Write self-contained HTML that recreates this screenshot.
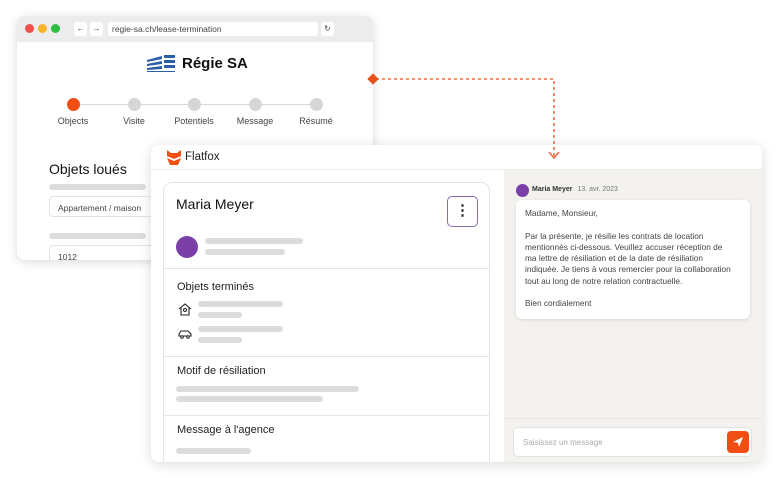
<!DOCTYPE html>
<html><head><meta charset="utf-8"><style>
*{box-sizing:border-box;margin:0;padding:0}
body{width:780px;height:478px;background:#fff;font-family:"Liberation Sans",sans-serif;position:relative;overflow:hidden;color:#222}
.abs{position:absolute}
.bar{position:absolute;background:#dcdcdc;border-radius:3px;height:6px}
.win1{left:17px;top:16px;width:356px;height:244px;border-radius:8px;background:#fff;box-shadow:0 2px 10px rgba(0,0,0,.15);overflow:hidden}
.tb{height:26px;background:#ececec;position:relative}
.dot{position:absolute;top:8px;width:9px;height:9px;border-radius:50%}
.nb{position:absolute;top:6px;width:13px;height:14px;background:#fff;border-radius:3px;font-size:8px;text-align:center;line-height:14px;color:#444}
.step{position:absolute;top:82px;width:13px;height:13px;border-radius:50%;background:#d6d6d6}
.sl{position:absolute;top:100px;font-size:9px;color:#444;width:70px;text-align:center}
.inp{position:absolute;left:32px;width:120px;height:21px;border:1px solid #e2e2e2;border-radius:4px;font-size:8.5px;color:#444;padding:6px 8px}
.win2{left:151px;top:145px;width:611px;height:317px;border-radius:8px;background:#fff;box-shadow:0 2px 12px rgba(0,0,0,.15);overflow:hidden}
.card{position:absolute;left:12px;top:37px;width:327px;height:300px;border:1px solid #e4e4e4;border-radius:9px;background:#fff}
.h{position:absolute;left:13px;font-size:11px;color:#222}
.hr{position:absolute;left:0;right:0;height:1px;background:#e6e6e6}
.chat{position:absolute;left:353px;top:25px;right:0;bottom:0;background:#f4f2ef}
.msg{position:absolute;left:12px;top:30px;width:234px;height:119px;background:#fff;border-radius:6px;box-shadow:0 1px 3px rgba(0,0,0,.12);font-size:8.3px;line-height:11.3px;color:#444;padding:8px 9px;white-space:nowrap}
</style></head><body>
<div class="abs win1">
 <div class="tb">
  <div class="dot" style="left:8px;background:#f0504a"></div>
  <div class="dot" style="left:21px;background:#f7b42c"></div>
  <div class="dot" style="left:34px;background:#2fbf44"></div>
  <div class="nb" style="left:57px">&#8592;</div>
  <div class="nb" style="left:73px">&#8594;</div>
  <div class="abs" style="left:91px;top:6px;width:210px;height:14px;background:#fff;border-radius:3px;font-size:8.5px;color:#444;padding:2px 4px">regie-sa.ch/lease-termination</div>
  <div class="nb" style="left:304px">&#8635;</div>
 </div>
 <svg class="abs" style="left:130px;top:38px" width="29" height="18" viewBox="0 0 29 18">
  <path d="M0 6 L15 2 L15 5 L0 8Z M0 10 L15 7 L15 10 L0 12Z M0 14 L15 12 L15 15 L0 16Z M17 1 L28 1 L28 4 L17 4Z M17 6 L28 6 L28 9 L17 9Z M17 11 L28 11 L28 14 L17 14Z M0 17 L28 17 L28 18 L0 18Z" fill="#2a5ea8"/>
 </svg>
 <div class="abs" style="left:165px;top:39px;font-size:15px;font-weight:bold;color:#111">Régie SA</div>
 <div class="abs" style="left:60px;top:88px;width:240px;height:1px;background:#d9d9d9"></div>
 <div class="step" style="left:50px;background:#f04e12"></div>
 <div class="step" style="left:111px"></div>
 <div class="step" style="left:171px"></div>
 <div class="step" style="left:232px"></div>
 <div class="step" style="left:293px"></div>
 <div class="sl" style="left:21px">Objects</div>
 <div class="sl" style="left:82px">Visite</div>
 <div class="sl" style="left:142px">Potentiels</div>
 <div class="sl" style="left:203px">Message</div>
 <div class="sl" style="left:264px">Résumé</div>
 <div class="abs" style="left:32px;top:145px;font-size:14px;color:#111">Objets loués</div>
 <div class="bar" style="left:32px;top:168px;width:97px"></div>
 <div class="inp" style="top:180px">Appartement / maison</div>
 <div class="bar" style="left:32px;top:217px;width:97px"></div>
 <div class="inp" style="top:229px;height:30px">1012</div>
</div>
<div class="abs win2">
 <div class="abs" style="left:0;top:0;right:0;height:25px;border-bottom:1px solid #eee;background:#fff"></div>
 <svg class="abs" style="left:16px;top:5px" width="14" height="16" viewBox="0 0 14 16">
  <path d="M0 0 L4 3 L10 3 L14 0 L14 6 L7 9 L0 6Z M0 8 L7 11 L14 8 L11 15 L3 15Z" fill="#f04e12"/>
 </svg>
 <div class="abs" style="left:34px;top:6px;font-size:11.5px;color:#222">Flatfox</div>
 <div class="card">
  <div class="abs" style="left:12px;top:13px;font-size:14px;color:#111">Maria Meyer</div>
  <div class="abs" style="left:283px;top:13px;width:31px;height:31px;border:1.5px solid #8c6cb4;border-radius:5px;text-align:center;font-size:15px;font-weight:bold;line-height:28px">&#8942;</div>
  <div class="abs" style="left:12px;top:53px;width:22px;height:22px;border-radius:50%;background:#7b3fa8"></div>
  <div class="bar" style="left:41px;top:55px;width:98px"></div>
  <div class="bar" style="left:41px;top:66px;width:80px"></div>
  <div class="hr" style="top:85px"></div>
  <div class="h" style="top:98px">Objets terminés</div>
  <svg class="abs" style="left:14px;top:120px" width="14" height="13" viewBox="0 0 14 13"><path d="M1 6 L7 1 L13 6 M3 5 V12 H11 V5" fill="none" stroke="#222" stroke-width="1.1"/><circle cx="7" cy="7" r="1.5" fill="none" stroke="#222"/></svg>
  <div class="bar" style="left:34px;top:118px;width:85px"></div>
  <div class="bar" style="left:34px;top:129px;width:44px"></div>
  <svg class="abs" style="left:14px;top:146px" width="14" height="10" viewBox="0 0 14 10"><path d="M1 7 V5 L3 2 H10 L13 5 V7 Z" fill="none" stroke="#222" stroke-width="1.1"/><circle cx="4" cy="8" r="1.3" fill="#fff" stroke="#222"/><circle cx="10" cy="8" r="1.3" fill="#fff" stroke="#222"/></svg>
  <div class="bar" style="left:34px;top:143px;width:85px"></div>
  <div class="bar" style="left:34px;top:154px;width:44px"></div>
  <div class="hr" style="top:173px"></div>
  <div class="h" style="top:182px">Motif de résiliation</div>
  <div class="bar" style="left:12px;top:203px;width:183px"></div>
  <div class="bar" style="left:12px;top:213px;width:147px"></div>
  <div class="hr" style="top:232px"></div>
  <div class="h" style="top:241px">Message à l'agence</div>
  <div class="bar" style="left:12px;top:265px;width:75px"></div>
 </div>
 <div class="chat">
  <div class="abs" style="left:12px;top:14px;width:13px;height:13px;border-radius:50%;background:#7b3fa8"></div>
  <div class="abs" style="left:28px;top:16px;font-size:7px;font-weight:bold;color:#333">Maria Meyer <span style="font-weight:normal;color:#777;margin-left:3px">13. avr. 2023</span></div>
  <div class="msg">Madame, Monsieur,<br><br>Par la présente, je résilie les contrats de location<br>mentionnés ci-dessous. Veuillez accuser réception de<br>ma lettre de résiliation et de la date de résiliation<br>indiquée. Je tiens à vous remercier pour la collaboration<br>tout au long de notre relation contractuelle.<br><br>Bien cordialement</div>
  <div class="abs" style="left:0;right:0;top:248px;height:1px;background:#e8e6e2"></div>
  <div class="abs" style="left:9px;top:257px;width:239px;height:30px;background:#fff;border:1px solid #e2e2e2;border-radius:5px;font-size:8px;color:#aaa;padding:10px 9px">Saisissez un message</div>
  <div class="abs" style="left:223px;top:261px;width:22px;height:22px;background:#f04e12;border-radius:4px">
   <svg width="22" height="22" viewBox="0 0 22 22"><path d="M6 11 L16 6 L12 16 L11 12Z" fill="#fff"/></svg>
  </div>
 </div>
</div>
<svg class="abs" style="left:366px;top:72px;z-index:5" width="200" height="90">
 <rect x="3" y="3" width="8" height="8" fill="#e8501c" transform="rotate(45 7 7)"/>
 <path d="M10 7 H188 V84" fill="none" stroke="#e8501c" stroke-width="1.3" stroke-dasharray="3 3"/>
 <path d="M183 80 L188 86 L193 80" fill="none" stroke="#e8501c" stroke-width="1.3"/>
</svg>
</body></html>
